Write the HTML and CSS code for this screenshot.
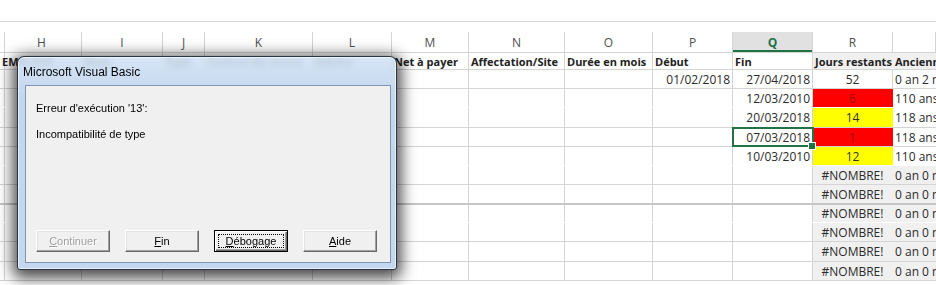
FILE: index.html
```html
<!DOCTYPE html>
<html>

<head>
    <meta charset="utf-8">
    <link rel="stylesheet" href="styles.css">
</head>

<body>
    <div id="sheet">
        <div class="bar"></div>
        <div class="gap"></div>

        <div class="row hdr">
            <div></div>
            <div>H</div>
            <div>I</div>
            <div>J</div>
            <div>K</div>
            <div>L</div>
            <div>M</div>
            <div>N</div>
            <div>O</div>
            <div>P</div>
            <div class="on">Q</div>
            <div>R</div>
            <div></div>
        </div>

        <div class="row r17 lbl">
            <div></div>
            <div>EMPLOYE</div>
            <div>Nom</div>
            <div>Type</div>
            <div>Contrat de recrut</div>
            <div>Salaire</div>
            <div>Net à payer</div>
            <div>Affectation/Site</div>
            <div>Durée en mois</div>
            <div>Début</div>
            <div>Fin</div>
            <div class="grey">Jours restants</div>
            <div class="grey">Ancienneté</div>
        </div>

        <div class="row r19">
            <div></div><div></div><div></div><div></div><div></div><div></div><div></div><div></div><div></div>
            <div class="num">01/02/2018</div>
            <div class="num">27/04/2018</div>
            <div class="mid">52</div>
            <div>0 an 2 mois</div>
        </div>

        <div class="row r19 nob">
            <div></div><div></div><div></div><div></div><div></div><div></div><div></div><div></div><div></div>
            <div></div>
            <div class="num">12/03/2010</div>
            <div class="mid red">6</div>
            <div>110 ans</div>
        </div>

        <div class="row r20">
            <div></div><div></div><div></div><div></div><div></div><div></div><div></div><div></div><div></div>
            <div></div>
            <div class="num">20/03/2018</div>
            <div class="mid yel">14</div>
            <div>118 ans</div>
        </div>

        <div class="row r19">
            <div></div><div></div><div></div><div></div><div></div><div></div><div></div><div></div><div></div>
            <div></div>
            <div class="num sel">07/03/2018</div>
            <div class="mid red">1</div>
            <div>118 ans</div>
        </div>

        <div class="row r19 nob">
            <div></div><div></div><div></div><div></div><div></div><div></div><div></div><div></div><div></div>
            <div></div>
            <div class="num">10/03/2010</div>
            <div class="mid yel">12</div>
            <div>110 ans</div>
        </div>

        <div class="row r19">
            <div></div><div></div><div></div><div></div><div></div><div></div><div></div><div></div><div></div>
            <div></div><div></div>
            <div class="mid grey">#NOMBRE!</div>
            <div class="grey">0 an 0 mois</div>
        </div>

        <div class="row r20 thick">
            <div></div><div></div><div></div><div></div><div></div><div></div><div></div><div></div><div></div>
            <div></div><div></div>
            <div class="mid grey">#NOMBRE!</div>
            <div class="grey">0 an 0 mois</div>
        </div>

        <div class="row r18 nob">
            <div></div><div></div><div></div><div></div><div></div><div></div><div></div><div></div><div></div>
            <div></div><div></div>
            <div class="mid grey">#NOMBRE!</div>
            <div class="grey">0 an 0 mois</div>
        </div>

        <div class="row r19">
            <div></div><div></div><div></div><div></div><div></div><div></div><div></div><div></div><div></div>
            <div></div><div></div>
            <div class="mid grey">#NOMBRE!</div>
            <div class="grey">0 an 0 mois</div>
        </div>

        <div class="row r20">
            <div></div><div></div><div></div><div></div><div></div><div></div><div></div><div></div><div></div>
            <div></div><div></div>
            <div class="mid grey">#NOMBRE!</div>
            <div class="grey">0 an 0 mois</div>
        </div>

        <div class="row r19">
            <div></div><div></div><div></div><div></div><div></div><div></div><div></div><div></div><div></div>
            <div></div><div></div>
            <div class="mid grey">#NOMBRE!</div>
            <div class="grey">0 an 0 mois</div>
        </div>
    </div>

    <!-- boite de dialogue VBA par dessus la feuille -->
    <div class="dlg">
        <div class="ttl">Microsoft Visual Basic</div>
        <div class="client">
            <p class="msg">Erreur d'exécution '13':</p>
            <p class="msg second">Incompatibilité de type</p>
            <div class="btns">
                <div class="btn off"><u>C</u>ontinuer</div>
                <div class="btn"><u>F</u>in</div>
                <div class="btn def"><u>D</u>ébogage</div>
                <div class="btn"><u>A</u>ide</div>
            </div>
        </div>
    </div>
</body>

</html>
```

FILE: styles.css
```css
* {
    box-sizing: border-box;
}

body {
    margin: 0;
    width: 936px;
    height: 285px;
    overflow: hidden;
    position: relative;
    background: #fff;
    font-family: "Open Sans", "Liberation Sans", sans-serif;
    color: #2b2b2b;
}

.bar {
    height: 22px;
    border-bottom: 1px solid #d5d5d5;
}

.gap {
    height: 10px;
}

.row {
    display: grid;
    grid-template-columns: 2px 80px 81px 42px 108px 79px 77px 96px 88px 80px 80px 80px 1fr;
    border-bottom: 1px solid #d4d4d4;
}

.row > div {
    border-right: 1px solid #d4d4d4;
    white-space: nowrap;
    overflow: hidden;
    display: flex;
    align-items: center;
    padding: 0 2px;
    font-size: 12px;
}

.row > div:last-child {
    overflow: visible;
}

.r17 { height: 17px; }
.r18 { height: 18px; }
.r19 { height: 19px; }
.r20 { height: 20px; }

.nob {
    border-bottom-color: transparent;
}

.thick {
    border-bottom: 2px solid #c6c6c6;
}

/* en-tetes de colonnes */
.hdr {
    height: 21px;
}

.hdr > div {
    justify-content: center;
    color: #505050;
    font-size: 12px;
}

.hdr .on {
    background: #e1e1e1;
    color: #217346;
    font-weight: 700;
    box-shadow: inset 0 -2px #217346;
}

.lbl > div {
    font-weight: 700;
    font-size: 11px;
    color: #222;
}

.lbl > div:nth-child(2) {
    padding-left: 0;
}

.num {
    justify-content: flex-end;
}

.mid {
    justify-content: center;
}

.row > .red {
    background: #ff0000;
    border-right-color: #ff0000;
    color: #a00000;
}

.row > .yel {
    background: #ffff00;
    border-right-color: #ffff00;
    color: #333;
}

.row > .grey {
    background: #f0f0f0;
    border-right-color: #f0f0f0;
}

.row > .sel {
    position: relative;
    z-index: 1;
    outline: 2px solid #217346;
    outline-offset: -1px;
    overflow: visible;
}

.sel::after {
    content: "";
    position: absolute;
    right: -4px;
    bottom: -4px;
    width: 6px;
    height: 6px;
    background: #217346;
    border: 1px solid #fff;
}

/* fenetre */
.dlg {
    position: absolute;
    left: 17px;
    top: 56px;
    width: 380px;
    height: 214px;
    z-index: 5;
    display: flex;
    flex-direction: column;
    border: 1px solid rgba(25, 35, 50, 0.9);
    border-radius: 7px 7px 3px 3px;
    background: linear-gradient(to bottom, rgba(208, 225, 244, 0.86), rgba(190, 211, 237, 0.92) 40px, rgba(192, 213, 238, 0.94));
    backdrop-filter: blur(3px);
    box-shadow: 0 4px 15px 4px rgba(0, 0, 0, 0.72), inset 0 0 0 1px rgba(255, 255, 255, 0.6);
    font-family: "Liberation Sans", Arial, sans-serif;
    color: #000;
}

.ttl {
    height: 28px;
    padding: 8px 0 0 5px;
    font-size: 12px;
}

.client {
    flex: 1;
    display: flex;
    flex-direction: column;
    margin: 0 5px 6px 7px;
    padding: 15px 10px 10px 10px;
    background: #f0f0f0;
    border: 1px solid #8197b0;
}

.msg {
    margin: 0;
    font-size: 11px;
    line-height: 14px;
}

.second {
    margin-top: 12px;
}

.btns {
    margin-top: auto;
    display: flex;
    gap: 15px;
}

.btn {
    width: 74px;
    height: 22px;
    display: flex;
    align-items: center;
    justify-content: center;
    font-size: 11px;
    background: #f0f0f0;
    border: 1px solid;
    border-color: #fff #696969 #696969 #fff;
    box-shadow: inset -1px -1px #a0a0a0, inset 1px 1px #e3e3e3;
}

.off {
    color: #a0a0a0;
    text-shadow: 1px 1px #fff;
}

.def {
    position: relative;
    border: 1px solid #000;
    box-shadow: inset 1px 1px #fff, inset -1px -1px #696969, inset -2px -2px #a0a0a0;
}

.def::after {
    content: "";
    position: absolute;
    left: 3px;
    top: 3px;
    right: 3px;
    bottom: 3px;
    border: 1px dotted #000;
}
```
